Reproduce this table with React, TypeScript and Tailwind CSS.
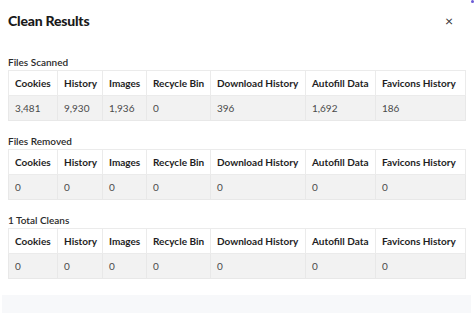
const columns = [
  { label: 'Cookies', w: 'w-[49px]' },
  { label: 'History', w: 'w-[45px]' },
  { label: 'Images', w: 'w-[44px]' },
  { label: 'Recycle Bin', w: 'w-[64px]' },
  { label: 'Download History', w: 'w-[95px]' },
  { label: 'Autofill Data', w: 'w-[70px]' },
  { label: 'Favicons History', w: 'w-[90px]' },
]

const sections = [
  { title: 'Files Scanned', values: ['3,481', '9,930', '1,936', '0', '396', '1,692', '186'] },
  { title: 'Files Removed', values: ['0', '0', '0', '0', '0', '0', '0'] },
  { title: '1 Total Cleans', values: ['0', '0', '0', '0', '0', '0', '0'] },
]

function StatsTable({ title, values }: { title: string; values: string[] }) {
  return (
    <div className="flex flex-col">
      <div className="text-[10px] leading-[12px] font-semibold text-[#2a2a2a] mb-[2px]">{title}</div>
      <table className="table-fixed border-collapse w-[457px]">
        <thead>
          <tr className="bg-white">
            {columns.map(c => (
              <th
                key={c.label}
                className={`${c.w} h-[25px] px-[6px] text-left text-[10px] font-bold text-[#1e1e1e] border border-[#ebebeb] whitespace-nowrap`}
              >
                {c.label}
              </th>
            ))}
          </tr>
        </thead>
        <tbody>
          <tr className="bg-[#f2f2f2]">
            {values.map((v, i) => (
              <td
                key={i}
                className="h-[25px] px-[6px] text-left text-[10px] text-[#4a4a4a] border border-[#e8e8e8]"
              >
                {v}
              </td>
            ))}
          </tr>
        </tbody>
      </table>
    </div>
  )
}

export default function App() {
  return (
    <div className="w-[474px] h-[313px] bg-white relative overflow-hidden" style={{ fontFamily: 'Lato, "Open Sans", sans-serif' }}>
      <div className="w-[471px] h-full flex flex-col">
        {/* Header */}
        <div className="flex items-center justify-between pl-[8px] pr-[18px] pt-[6px] h-[35px]">
          <h1 className="text-[14px] font-black text-[#1a1a1a] tracking-[-0.2px]">Clean Results</h1>
          <button className="text-[#333] text-[14px] leading-none">×</button>
        </div>

        <div className="flex flex-col gap-[14px] pl-[8px] pt-[21px]">
          {sections.map(s => (
            <StatsTable key={s.title} title={s.title} values={s.values} />
          ))}
        </div>

        {/* Footer band */}
        <div className="mt-auto ml-[2px] h-[18px] bg-[#f7f8fa]" />
      </div>
      <div className="absolute right-0 top-0 w-[3px] h-[3px] bg-[#6b5bd6] rounded-full" />
    </div>
  )
}
